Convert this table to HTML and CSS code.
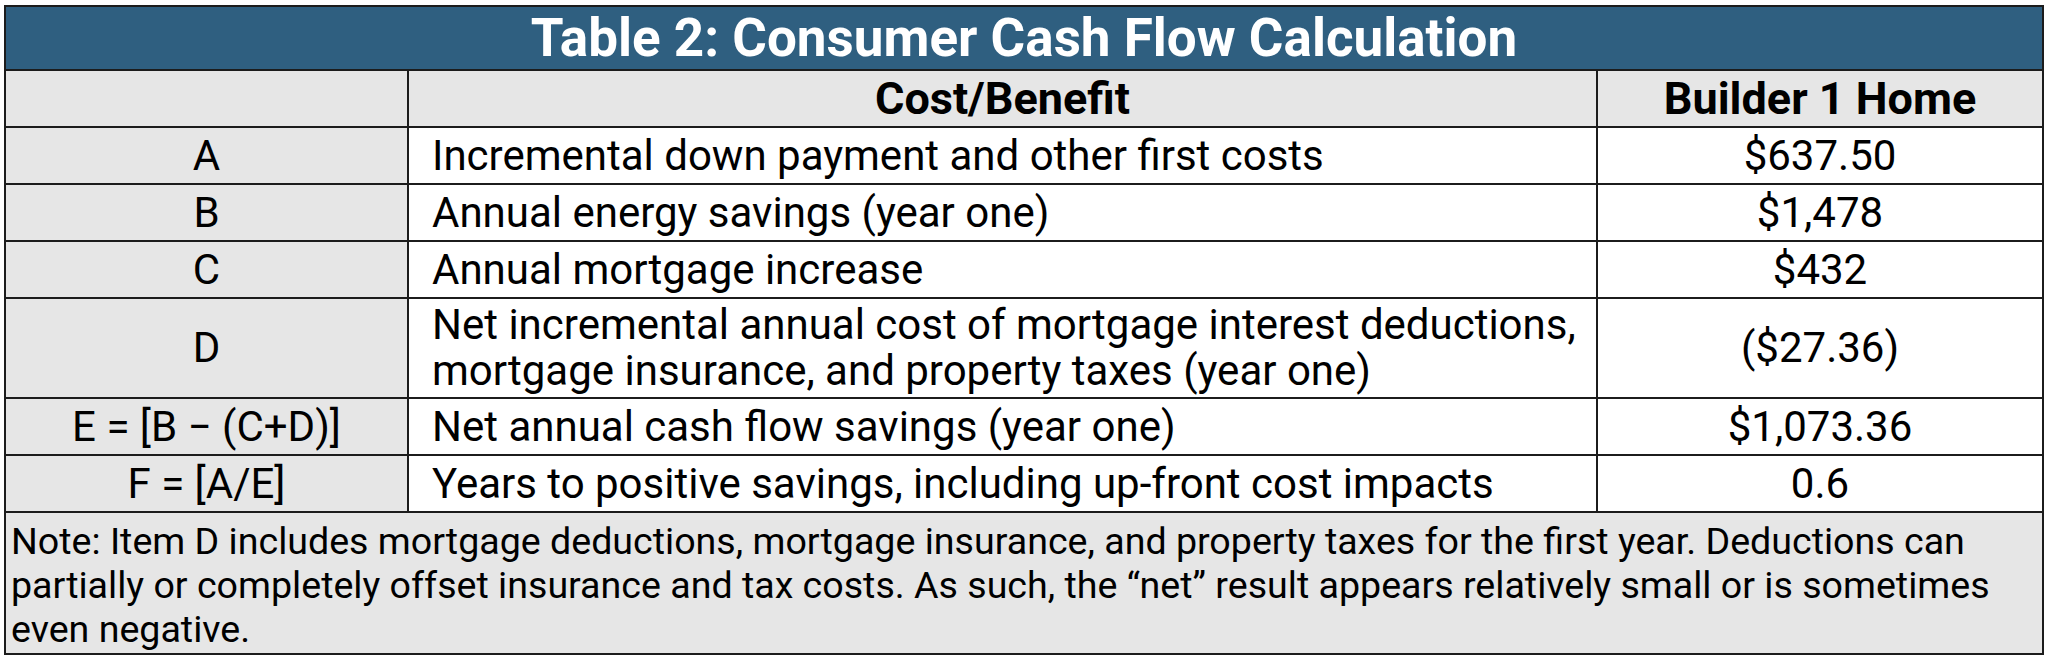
FILE: index.html
```html
<!DOCTYPE html>
<html lang="en">
<head>
<meta charset="utf-8">
<title>Table 2: Consumer Cash Flow Calculation</title>
<link rel="stylesheet" href="styles.css">
</head>
<body>
<table class="cf-table">
  <colgroup>
    <col class="col-key">
    <col class="col-desc">
    <col class="col-val">
  </colgroup>
  <thead>
    <tr class="title-row">
      <th colspan="3" class="title">Table 2: Consumer Cash Flow Calculation</th>
    </tr>
    <tr class="head-row">
      <th class="key"></th>
      <th class="head">Cost/Benefit</th>
      <th class="head">Builder 1 Home</th>
    </tr>
  </thead>
  <tbody>
    <tr class="row">
      <td class="key">A</td>
      <td class="desc">Incremental down payment and other first costs</td>
      <td class="val">$637.50</td>
    </tr>
    <tr class="row">
      <td class="key">B</td>
      <td class="desc">Annual energy savings (year one)</td>
      <td class="val">$1,478</td>
    </tr>
    <tr class="row">
      <td class="key">C</td>
      <td class="desc">Annual mortgage increase</td>
      <td class="val">$432</td>
    </tr>
    <tr class="row row-tall">
      <td class="key">D</td>
      <td class="desc">Net incremental annual cost of mortgage interest deductions, mortgage insurance, and property taxes (year one)</td>
      <td class="val">($27.36)</td>
    </tr>
    <tr class="row">
      <td class="key">E = [B &minus; (C+D)]</td>
      <td class="desc">Net annual cash flow savings (year one)</td>
      <td class="val">$1,073.36</td>
    </tr>
    <tr class="row">
      <td class="key">F = [A/E]</td>
      <td class="desc">Years to positive savings, including up-front cost impacts</td>
      <td class="val">0.6</td>
    </tr>
    <tr class="note-row">
      <td colspan="3" class="note">Note: Item D includes mortgage deductions, mortgage insurance, and property taxes for the first year. Deductions can partially or completely offset insurance and tax costs. As such, the &ldquo;net&rdquo; result appears relatively small or is sometimes even negative.</td>
    </tr>
  </tbody>
</table>
</body>
</html>
```
FILE: styles.css
```css
html, body {
  margin: 0;
  padding: 0;
  background: #ffffff;
}

body {
  padding: 5px 0 0 4px;
  font-family: Roboto, "Liberation Sans", Arial, sans-serif;
  color: #000;
}

.cf-table {
  border-collapse: collapse;
  width: 2038px;
  table-layout: fixed;
  font-size: 42px;
  line-height: 46px;
}

.col-key { width: 403px; }
.col-desc { width: 1189px; }
.col-val { width: 446px; }

.cf-table th,
.cf-table td {
  border: 2px solid #1c1c1c;
  padding: 0;
  vertical-align: middle;
}

.title {
  background: #2f5f80;
  color: #ffffff;
  font-weight: 700;
  font-size: 53px;
  height: 62px;
  text-align: center;
}

.head-row th {
  background: #e6e6e6;
  height: 55px;
  font-weight: 700;
  font-size: 45px;
  text-align: center;
}

.row td {
  height: 55px;
}

.row-tall td {
  height: 98px;
}

.key {
  background: #e6e6e6;
  text-align: center;
}

.desc {
  background: #fff;
  text-align: left;
  padding-left: 23px !important;
}

.val {
  background: #fff;
  text-align: center;
}

.note {
  background: #e6e6e6;
  font-size: 37.6px;
  line-height: 44px;
  padding: 6px 2px 2px 5px !important;
  height: 130px;
  text-align: left;
}
```
